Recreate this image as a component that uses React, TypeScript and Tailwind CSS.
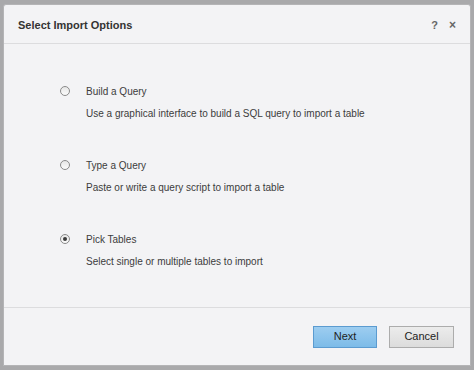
import React, { useState } from "react";

const options = [
  { id: "build", label: "Build a Query", description: "Use a graphical interface to build a SQL query to import a table" },
  { id: "type", label: "Type a Query", description: "Paste or write a query script to import a table" },
  { id: "pick", label: "Pick Tables", description: "Select single or multiple tables to import" },
];

const Radio: React.FC<{ checked: boolean }> = ({ checked }) => (
  <span className="flex h-[10px] w-[10px] items-center justify-center rounded-full border border-[#8a8a8a] bg-gradient-to-b from-[#e6e6e6] to-[#fbfbfb]">
    {checked && <span className="h-[4px] w-[4px] rounded-full bg-[#3a3a3a]" />}
  </span>
);

const App: React.FC = () => {
  const [selected, setSelected] = useState<string>("pick");

  return (
    <div className="h-[370px] w-[474px] bg-[#a9a9ab] pl-[3px] pt-[4px] font-['Liberation_Sans',Arial,sans-serif]">
      <div className="flex h-[362px] w-[468px] flex-col rounded-t-[3px] border border-[#b4b4b6] bg-[#f3f3f5]">
        <div className="flex h-[39px] shrink-0 items-center justify-between border-b border-[#dcdcde] pl-[14px] pr-[14px] pt-[2px]">
          <div className="text-[11px] font-bold text-[#333]">Select Import Options</div>
          <div className="flex items-center gap-[11px] text-[11px] font-bold text-[#666]">
            <span>?</span>
            <span className="text-[12px]">×</span>
          </div>
        </div>
        <div className="flex flex-1 flex-col gap-[38px] pl-[56px] pt-[41px]">
          {options.map(option => (
            <div key={option.id} className="cursor-pointer" onClick={() => setSelected(option.id)}>
              <div className="flex h-[12px] items-center gap-[16px]">
                <Radio checked={selected === option.id} />
                <span className="text-[10px] text-[#3c3c3c]">{option.label}</span>
              </div>
              <div className="mt-[9px] pl-[26px] text-[10px] text-[#3c3c3c]">{option.description}</div>
            </div>
          ))}
        </div>
        <div className="flex h-[58px] shrink-0 items-center justify-end gap-[12px] border-t border-[#dcdcde] pr-[16px]">
          <button className="h-[22px] w-[64px] border border-[#5b9bd0] bg-gradient-to-b from-[#9dcdf0] to-[#7cbbe8] text-[11px] text-[#222]">
            Next
          </button>
          <button className="h-[22px] w-[65px] border border-[#acacac] bg-gradient-to-b from-[#ececec] to-[#dcdcdc] text-[11px] text-[#222]">
            Cancel
          </button>
        </div>
      </div>
    </div>
  );
};

export default App;
